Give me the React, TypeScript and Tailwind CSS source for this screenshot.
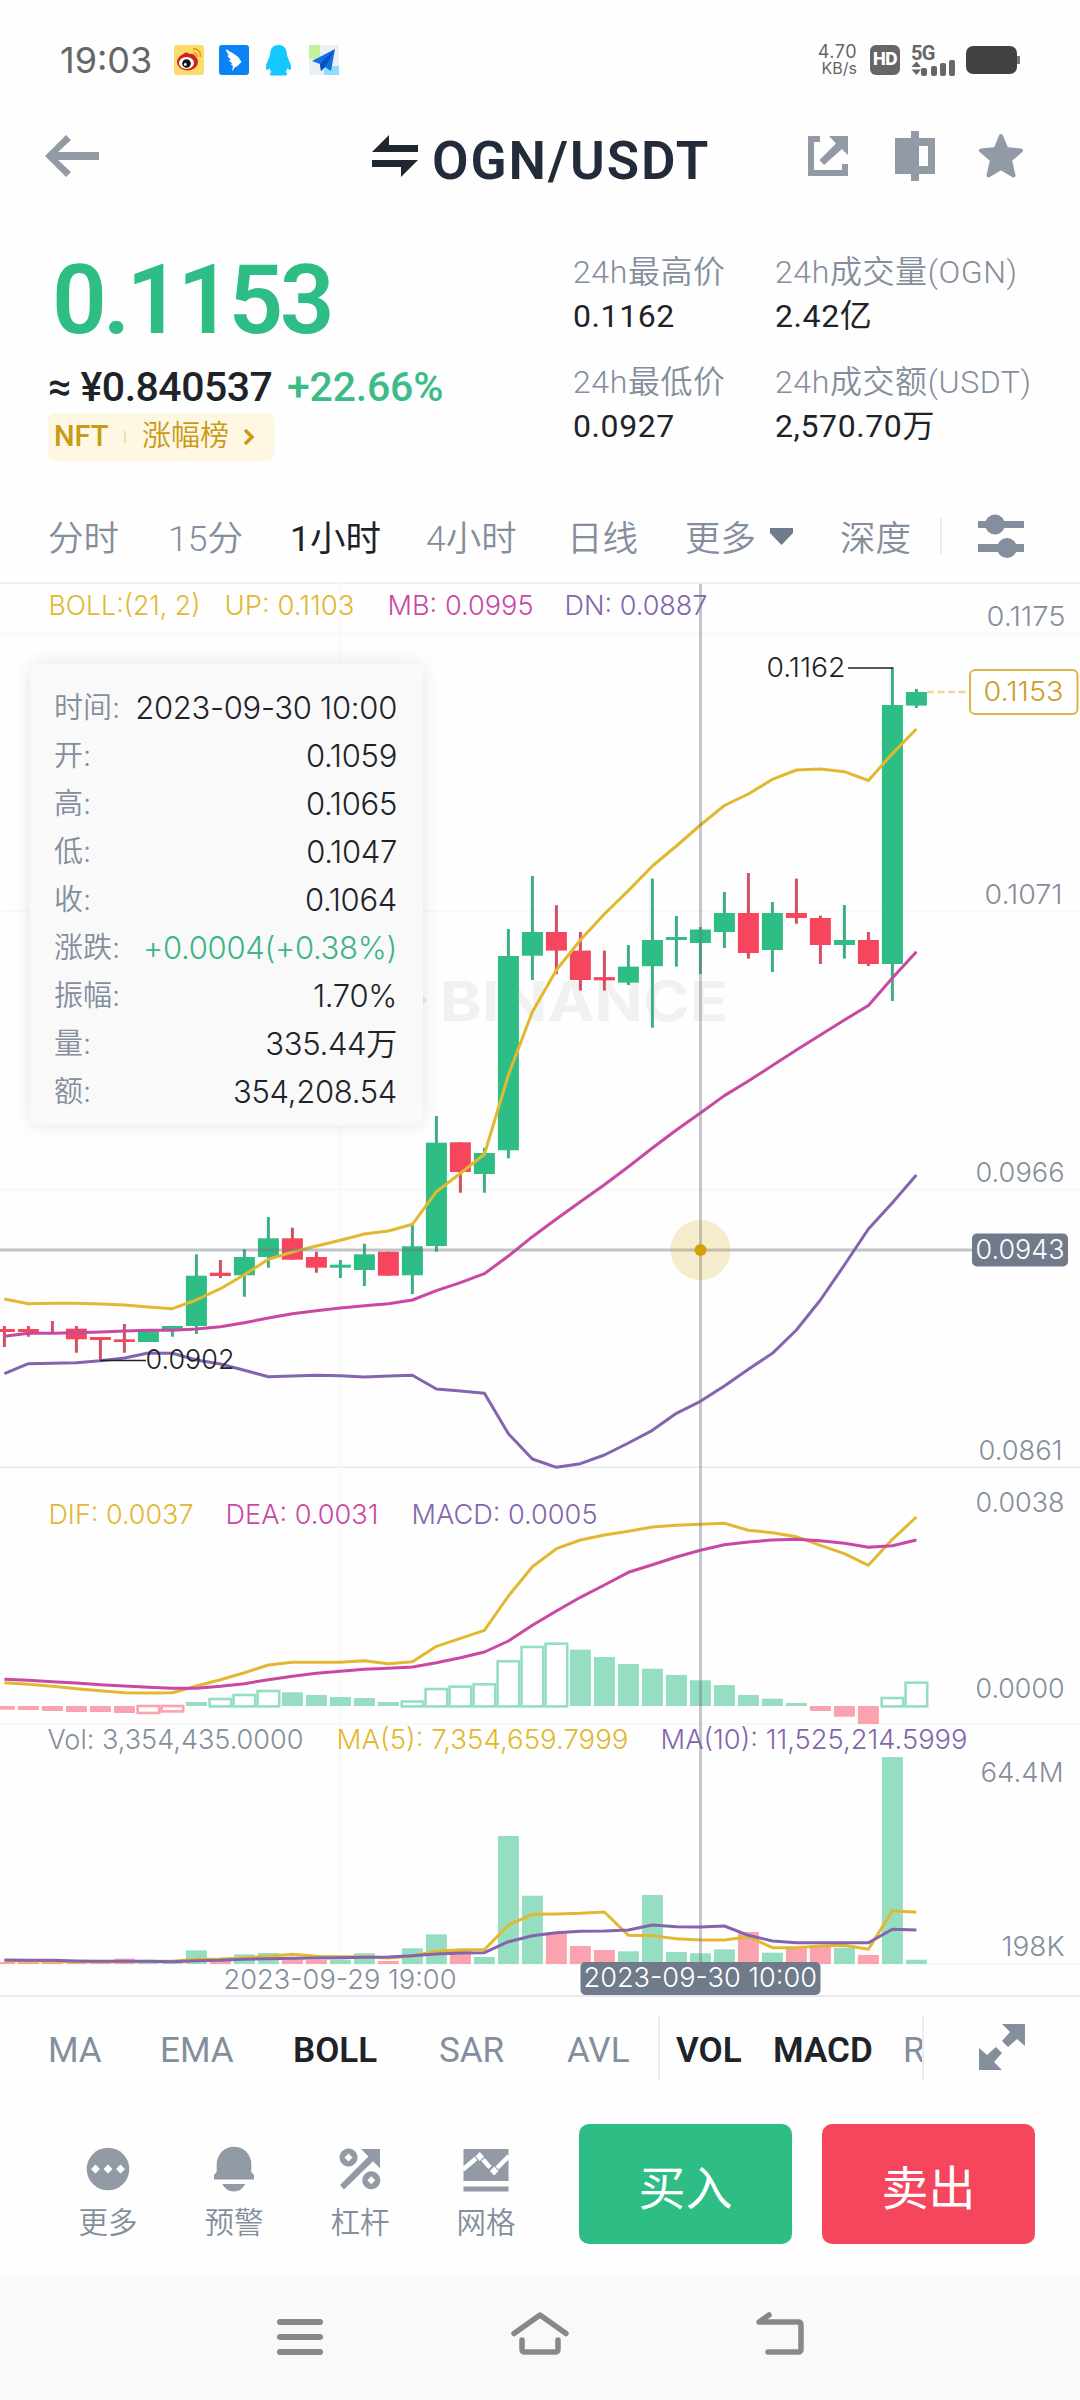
import type { ReactNode } from 'react'
import { clsx } from 'clsx'

const UI = "font-[Roboto,'Noto_Sans_CJK_SC',sans-serif]"
const NUM = "font-[Inter,'Noto_Sans_CJK_SC',sans-serif]"

const GREEN = '#2ebd85'
const RED = '#f6465d'
const GOLD = '#e2b830'
const PINK = '#c948a4'
const PURPLE = '#8465ad'
const GREY = '#848e9c'
const INK = '#1e2329'

// chart geometry: one candle every 24px, svg is shifted by the page offset
const TOP = 582
const HEIGHT = 1416
const cx = (i: number) => 4.4 + i * 24

// dir, high, body top, body bottom, low
type Candle = ['u' | 'd', number, number, number, number]
const CANDLES: Candle[] = [
  ['d', 1326, 1329, 1332, 1347], ['d', 1326, 1329, 1332, 1336.7], ['d', 1321, 1332, 1334, 1334],
  ['d', 1326, 1328.7, 1339.3, 1352.7], ['d', 1337, 1337, 1340, 1360], ['d', 1324, 1339.3, 1342, 1352.7],
  ['u', 1330.7, 1330.7, 1342, 1342], ['u', 1326, 1326, 1330, 1336.7], ['u', 1254.3, 1275.7, 1326, 1334],
  ['d', 1260, 1272.7, 1276, 1278], ['u', 1249, 1257, 1275.3, 1296.7], ['u', 1217, 1238.3, 1257, 1267.7],
  ['d', 1227.7, 1238.3, 1259.7, 1259.7], ['d', 1251.7, 1257, 1267.7, 1272.7], ['u', 1260, 1264.7, 1267.7, 1278],
  ['u', 1243.7, 1254.3, 1270, 1286], ['d', 1251.7, 1251.7, 1275.7, 1275.7], ['u', 1224, 1246.3, 1275.3, 1294],
  ['u', 1116, 1142.7, 1246, 1251.7], ['d', 1142.3, 1142.3, 1172, 1192.7], ['u', 1147.7, 1153, 1174, 1192.7],
  ['u', 929, 956, 1150.3, 1158.3], ['u', 876, 932, 955.7, 980], ['d', 905.2, 932, 950.6, 974.2],
  ['d', 932, 950.6, 980, 990.6], ['d', 950.6, 977.1, 980.4, 990.6], ['u', 945, 966.6, 982.6, 985],
  ['u', 878.6, 940, 966.2, 1027.7], ['u', 916, 937, 940, 966.6], ['u', 927, 929.5, 943, 974],
  ['u', 892, 913, 932, 948], ['d', 873, 913, 953, 958.6], ['u', 902, 913, 950, 972],
  ['d', 878.6, 913, 918, 923.7], ['d', 915.7, 918, 945, 964], ['u', 905, 940, 945, 958.6],
  ['d', 932, 940, 964, 966], ['u', 667.4, 705, 964, 1001], ['u', 689, 692, 705.6, 708],
]

const UP = [1299, 1303.7, 1303.3, 1303.3, 1304, 1305, 1307, 1308.7, 1300, 1288.7, 1274.7, 1259.3, 1252, 1246, 1240.3, 1234, 1231, 1224.3, 1191.7, 1173.3, 1154.3, 1075, 1011.7, 970, 940, 914, 890.6, 866, 846, 825, 805.5, 794, 779.4, 770, 769, 771.7, 780.5, 753.6, 729]
const MB = [1336.3, 1333.3, 1333.3, 1332.7, 1332, 1331, 1330.3, 1330.3, 1329, 1326.7, 1322.7, 1318, 1313.7, 1310.7, 1308, 1305.7, 1303.7, 1300, 1290.7, 1282.7, 1273.7, 1256, 1236.7, 1219, 1201.7, 1184.7, 1166.7, 1148, 1130, 1113, 1095.6, 1081, 1065.5, 1050, 1035, 1020, 1005.5, 978, 951.7]
const DN = [1373.7, 1363.7, 1363.3, 1362.7, 1360.7, 1358, 1353, 1353.3, 1360, 1364, 1370.3, 1376.7, 1376, 1375.3, 1375.7, 1377, 1376, 1375.3, 1389, 1391, 1393.3, 1433.7, 1459, 1467.3, 1463.7, 1455, 1443, 1430.3, 1413.3, 1401.3, 1386, 1369.3, 1353.3, 1330, 1300, 1265, 1229, 1202.7, 1175]
const DIF = [1682.7, 1684.3, 1686.3, 1688.7, 1690.7, 1692.7, 1693, 1692.7, 1686, 1679.7, 1672.7, 1665, 1662.3, 1662.3, 1662.3, 1660.7, 1663.7, 1661.7, 1646.3, 1638.3, 1630.3, 1596, 1566.7, 1548.7, 1540, 1535, 1531.3, 1527, 1525.3, 1524.3, 1523.3, 1530.3, 1532.7, 1536.7, 1545.3, 1553.7, 1565.3, 1539.3, 1517]
const DEA = [1679.3, 1680.3, 1681.7, 1683, 1684.7, 1686, 1687.3, 1688.3, 1688.3, 1686.3, 1683.7, 1679.7, 1676.3, 1673.3, 1671.3, 1669.3, 1668.3, 1667, 1662.7, 1657.7, 1652, 1641, 1625.3, 1611, 1597.3, 1585, 1572.3, 1564.7, 1557, 1550.3, 1544.7, 1542, 1540, 1539.3, 1540.7, 1543.3, 1547.3, 1545.7, 1540]
const MA5 = [1961, 1961, 1961.3, 1961.7, 1961.7, 1961.7, 1961.3, 1961.3, 1959.3, 1959, 1958, 1956.3, 1954.3, 1956.3, 1956.7, 1956.7, 1958, 1956, 1951.3, 1949.7, 1949.7, 1925, 1914.3, 1914, 1913.3, 1912, 1935.3, 1935.7, 1938.7, 1940, 1940, 1936.7, 1947.7, 1947.7, 1946, 1945.3, 1949.3, 1910.7, 1912.3]
const MA10 = [1960, 1960.3, 1960.3, 1961, 1961.3, 1961.3, 1961.3, 1961.7, 1960.7, 1960.3, 1959.3, 1958.7, 1958.3, 1958, 1957.7, 1957.3, 1957, 1955.7, 1954, 1953, 1952.7, 1941.7, 1935.7, 1932.7, 1931.3, 1931, 1930, 1925, 1926.7, 1927, 1926, 1935.3, 1941, 1942.7, 1942.7, 1942.7, 1942.7, 1929.3, 1930]

// histogram end of each bar against the zero line
const ZERO = 1706
const HIST = [1709.7, 1710, 1711, 1712, 1712, 1713, 1712.5, 1711, 1702, 1699, 1695, 1691, 1692.3, 1695, 1697, 1698, 1702, 1701.5, 1689, 1686.7, 1684.3, 1661.3, 1647, 1643.7, 1649.7, 1657, 1664, 1668.7, 1675, 1680.3, 1685, 1695, 1698.7, 1703, 1711, 1716.7, 1724, 1698, 1682.7]
const HOLLOW = new Set([6, 7, 9, 10, 11, 17, 18, 19, 20, 21, 22, 23, 37, 38])

const VOL_BASE = 1964
const VOL = [1962, 1962, 1962, 1962, 1962, 1958.7, 1962, 1962, 1950.3, 1958.7, 1954.3, 1953, 1958.7, 1960, 1959.7, 1953.3, 1961, 1948.3, 1934.3, 1949, 1957, 1836, 1895.7, 1932.3, 1946, 1950, 1951.3, 1895, 1952, 1953.3, 1949.3, 1932, 1952.7, 1948.3, 1946.7, 1947.7, 1955, 1757, 1959.7]

const GRID_Y = [633.6, 911.3, 1189.3, 1724, 1964]

const points = (ys: number[]) => ys.map((y, i) => `${cx(i)},${y}`).join(' ')

// text, left, right, baseline, colour, size
type Label = [string, number, number, number, string, number]
const LABELS: Label[] = [
  ['BOLL:(21, 2)', 50, 199, 614.5, GOLD, 27.5],
  ['UP: 0.1103', 226, 353, 614.5, GOLD, 27.5],
  ['MB: 0.0995', 389, 532, 614.5, PINK, 27.5],
  ['DN: 0.0887', 566, 706, 614.5, PURPLE, 27.5],
  ['DIF: 0.0037', 50, 192, 1523.5, GOLD, 27.5],
  ['DEA: 0.0031', 227, 377, 1523.5, PINK, 27.5],
  ['MACD: 0.0005', 413, 596, 1523.5, PURPLE, 27.5],
  ['Vol: 3,354,435.0000', 49, 302, 1748.5, GREY, 27.5],
  ['MA(5): 7,354,659.7999', 338, 627, 1748.5, GOLD, 27.5],
  ['MA(10): 11,525,214.5999', 662, 966, 1748.5, PURPLE, 27.5],
  ['0.1175', 988, 1064, 625.5, GREY, 27.5],
  ['0.1071', 986, 1061, 904, GREY, 27.5],
  ['0.0966', 977, 1063, 1181.5, GREY, 27.5],
  ['0.0861', 980, 1061, 1459.5, GREY, 27.5],
  ['0.0038', 977, 1063, 1511.5, GREY, 27.5],
  ['0.0000', 977, 1063, 1697.5, GREY, 27.5],
  ['64.4M', 982, 1062, 1781.5, GREY, 27.5],
  ['198K', 1003, 1063, 1955.5, GREY, 27.5],
  ['2023-09-29 19:00', 225, 455, 1988.5, GREY, 27.5],
  ['0.1162', 768, 844, 676.5, INK, 27.5],
  ['0.0902', 147, 233, 1368.5, INK, 27.5],
]

function ChartText({ label: [text, left, right, y, fill, size] }: { label: Label }) {
  return (
    <text x={left - 1.5} y={y} fill={fill} fontSize={size} fontWeight={350} textLength={right - left + 3} lengthAdjust="spacingAndGlyphs">
      {text}
    </text>
  )
}

function Chart() {
  return (
    <svg className={clsx('block', NUM)} width={1080} height={HEIGHT} viewBox={`0 ${TOP} 1080 ${HEIGHT}`}>
      <rect x={0} y={TOP} width={1080} height={2} fill="#eef0f2" />
      {GRID_Y.map((y) => <rect key={y} x={0} y={y - 1} width={1080} height={2} fill="#f8f8f9" />)}
      <rect x={0} y={1466.5} width={1080} height={1.5} fill="#e8eaed" />
      <rect x={339.5} y={TOP} width={2} height={1382} fill="#f8f8f9" />
      <rect x={0} y={1995} width={1080} height={2} fill="#e8e9eb" />

      {/* watermark */}
      <path d="M419 992l8.5 8.5l-8.5 8.5z" fill="#ededee" />
      <text x={440} y={1021} fontSize={55} fontWeight={700} fill="#f0f1f1" textLength={288} lengthAdjust="spacingAndGlyphs">BINANCE</text>

      {CANDLES.map(([dir, high, top, bottom, low], i) => (
        <g key={i} fill={dir === 'u' ? GREEN : RED}>
          <rect x={cx(i) - 1.5} y={high} width={3} height={low - high} fill={dir === 'u' ? '#3fae82' : '#d2505f'} />
          <rect x={cx(i) - 10.5} y={top} width={21} height={bottom - top} />
        </g>
      ))}

      {HIST.map((y, i) => {
        const color = y < ZERO ? '#96dec2' : '#faa2ae'
        const top = Math.min(y, ZERO)
        const h = Math.abs(y - ZERO)
        return HOLLOW.has(i)
          ? <rect key={i} x={cx(i) - 10.8} y={top} width={21.6} height={h + 0.4} fill="#fff" stroke={color} strokeWidth={2.6} />
          : <rect key={i} x={cx(i) - 10.5} y={top} width={21} height={h} fill={color} />
      })}

      {VOL.map((y, i) => (
        <rect key={i} x={cx(i) - 10.5} y={y} width={21} height={VOL_BASE - y} fill={CANDLES[i][0] === 'u' ? '#96dec2' : '#faa2ae'} />
      ))}

      <g fill="none" strokeWidth={3} strokeLinejoin="round">
        <polyline points={points(UP)} stroke={GOLD} />
        <polyline points={points(MB)} stroke={PINK} />
        <polyline points={points(DN)} stroke={PURPLE} />
        <polyline points={points(DIF)} stroke={GOLD} />
        <polyline points={points(DEA)} stroke={PINK} />
        <polyline points={points(MA5)} stroke={GOLD} />
        <polyline points={points(MA10)} stroke={PURPLE} />
      </g>

      {/* high / low markers */}
      <path d="M848 668H893M100 1360.5H146" stroke={INK} strokeWidth={1.5} />
      {LABELS.map((label) => <ChartText key={label[0] + label[3]} label={label} />)}

      {/* last price */}
      <path d="M927 692H969" stroke="#ecd79a" strokeWidth={2.5} strokeDasharray="7 3.5" />
      <rect x={970} y={670} width={107.5} height={44} rx={5} fill="#fff" stroke="#dcb840" strokeWidth={2} />
      <ChartText label={['0.1153', 985, 1062, 701, '#c99f2c', 27.5]} />

      {/* crosshair */}
      <g stroke="#6b7280" strokeOpacity={0.42} strokeWidth={2.8}>
        <path d="M700.5 584V1963" />
        <path d="M0 1250H972" />
      </g>
      <circle cx={700.5} cy={1250} r={30} fill="#d4a00a" fillOpacity={0.2} />
      <circle cx={700.5} cy={1250} r={6} fill="#d4a00a" />
      <rect x={972} y={1233.5} width={96} height={33} rx={5} fill="#707a8a" />
      <ChartText label={['0.0943', 977, 1063, 1259, '#fff', 27.5]} />
      <rect x={580.5} y={1962} width={240} height={33} rx={5} fill="#707a8a" />
      <ChartText label={['2023-09-30 10:00', 585, 815.5, 1987, '#fff', 27.5]} />
    </svg>
  )
}

const DETAILS = [
  ['时间:', '2023-09-30 10:00'],
  ['开:', '0.1059'],
  ['高:', '0.1065'],
  ['低:', '0.1047'],
  ['收:', '0.1064'],
  ['涨跌:', '+0.0004(+0.38%)'],
  ['振幅:', '1.70%'],
  ['量:', '335.44万'],
  ['额:', '354,208.54'],
]

function CandleDetails() {
  return (
    <div className={clsx('absolute top-[82px] left-[30px] h-[461px] w-[393px] rounded-md bg-[#f9f9f9] pt-5 pr-[26px] pl-6 shadow-[0_0_18px_rgba(0,0,0,0.1)]', NUM)}>
      {DETAILS.map(([label, value]) => (
        <div key={label} className="flex h-12 items-center justify-between whitespace-nowrap">
          <span className="text-[29px] font-[350] text-[#848e9c]">{label}</span>
          <span className={clsx('text-[31px] font-[350] tracking-[-0.3px]', value.startsWith('+') ? 'text-[#3db585]' : 'text-[#1e2329]')}>{value}</span>
        </div>
      ))}
    </div>
  )
}

function StatusBar() {
  return (
    <div className={clsx('flex h-[120px] items-center pr-[60px] pl-[60px] text-[#666]', NUM)}>
      <span className="w-[114px] text-[36px]">19:03</span>
      <svg width="30" height="30" viewBox="0 0 30 30">
        <rect width="30" height="30" rx="3" fill="#fddb6a" />
        <ellipse cx="13.5" cy="17" rx="10.5" ry="8.5" fill="#d2201f" />
        <path d="M7 12c3-5 7-6 8-2c4-2 7 0 6 3z" fill="#d2201f" />
        <ellipse cx="12.5" cy="18" rx="7.5" ry="6" fill="#fff" />
        <circle cx="12.5" cy="18.5" r="4.3" fill="#111" />
        <circle cx="11.3" cy="19.5" r="1.4" fill="#fff" />
        <path d="M19 4c5-.5 8 3 7.500 8M19.500 8c2.500 0 4 1.500 3.500 4" fill="none" stroke="#f09a1a" strokeWidth="1.800" />
      </svg>
      <svg className="ml-[15px]" width="30" height="30" viewBox="0 0 30 30">
        <rect width="30" height="30" rx="3" fill="#0a84f5" />
        <path d="M7 4c6 4 11 6 13 9l2.500 4-4.500 4.500-2 .5-3 4.500 1-5.500-2.500-2 2-.5-4-3 2.500-.3L8 10.500l2-.3C8 8 7 6 7 4z" fill="#fff" />
      </svg>
      <svg className="ml-4" width="27" height="31" viewBox="0 0 27 31">
        <path d="M13.500 0C7.500 0 5 4.500 5 10.500L1.500 19C.5 22 1 25 2 25c1 0 2-1 2.500-2 .5 2 1 3 2 4-2 1-2.500 3.500.5 3.500h13c3 0 2.500-2.500.5-3.500 1-1 1.500-2 2-4 .5 1 1.500 2 2.500 2s1.500-3 .5-6L22 10.500C22 4.500 19.500 0 13.500 0z" fill="#12c8ff" />
      </svg>
      <svg className="ml-[17px]" width="30" height="30" viewBox="0 0 30 30">
        <rect width="30" height="30" fill="#e9f1f7" />
        <path d="M0 0h11v14H0z" fill="#c2f19a" />
        <path d="M15 21h15v9H15z" fill="#8fdffc" />
        <path d="M26 4L3 16l8 3 1 7 4-4 6 4z" fill="#0f6ee8" />
        <path d="M26 4L11 19l1 7 4-4z" fill="#0a4fb8" />
      </svg>

      <div className="ml-auto flex items-center">
        <div className="flex flex-col items-end text-[16px] leading-[16px]">
          <span className="text-[18px] tracking-[0.5px]">4.70</span>
          <span>KB/s</span>
        </div>
        <div className="ml-[13px] flex h-[30px] w-[30px] items-center justify-center rounded-[6px] bg-[#666] text-[17px] font-extrabold tracking-[-0.5px] text-white">HD</div>
        <div className="ml-[11px] h-[31px] w-[46px]">
          <div className={clsx('h-[15px] text-[20px] leading-[17px] font-bold tracking-[-0.8px]', UI)}>5G</div>
          <svg className="block" width="46" height="16" viewBox="0 15 46 16" fill="#666">
            <path d="M.5 22l5-5.500L10 22zM.5 24.500l5 5.500L10 24.500z" />
            <rect x="10" y="23" width="6" height="8" rx="2" />
            <rect x="20" y="21" width="6" height="10" rx="2" />
            <rect x="29" y="18" width="6" height="13" rx="2" />
            <rect x="38" y="15" width="6" height="16" rx="2" />
          </svg>
        </div>
        <svg className="ml-[9px]" width="54" height="28" viewBox="0 0 54 28">
          <rect width="51" height="28" rx="7" fill="#424242" />
          <rect x="51" y="10" width="3" height="8" fill="#777" />
        </svg>
      </div>
    </div>
  )
}

function Header() {
  return (
    <header className="flex h-[72px] items-center pr-[57px] pl-[45px] text-[#929aa5]">
      <svg width="54" height="44" viewBox="0 0 54 44" fill="currentColor">
        <path d="M0 22L21 1l5 5-13 12h41v8H13l13 12-5 5z" />
      </svg>
      <div className="ml-[273px] flex items-center text-[#1f2630]">
        <svg width="46" height="44" viewBox="0 0 46 44" fill="currentColor">
          <path d="M0 18L17 1v10h29v7zM46 26L29 43V33H0v-7z" />
        </svg>
        <h1 className="ml-3.5 w-[280px] pt-2.5 text-[53px] leading-none font-semibold tracking-[1.9px] text-[#222b3a]">OGN/USDT</h1>
      </div>
      <svg className="ml-auto" width="40" height="40" viewBox="0 0 40 40" fill="currentColor">
        <path d="M0 0h12v6H6v28h28v-6h6v12H0z" />
        <path d="M21 0h19v19l-6-6-18 16-4.500-5L28 7.500z" />
      </svg>
      <svg className="ml-[47px]" width="40" height="50" viewBox="0 0 40 50" fill="currentColor">
        <path d="M16 0h8v7h16v36H24v7h-8v-7H0V7h16zM24 15v20h9V15z" fillRule="evenodd" />
      </svg>
      <svg className="ml-[44px]" width="44" height="46" viewBox="0 0 44 46" fill="currentColor" stroke="currentColor" strokeWidth="4" strokeLinejoin="round">
        <path d="M22 3l5.500 13L42 17.500 31 27l3.500 15.500L22 35 9.500 42.500 13 27 2 17.500 16.500 16z" />
      </svg>
    </header>
  )
}

function Stat({ label, value }: { label: string; value: string }) {
  return (
    <div className="h-[110px] whitespace-nowrap">
      <div className="text-[32px] leading-[44px] font-[350] tracking-[0.6px] text-[#848e9c]">{label}</div>
      <div className="text-[32px] leading-[44px] tracking-[0.6px] text-[#1e2329]">{value}</div>
    </div>
  )
}

function Summary() {
  return (
    <section className="flex h-[298px] pl-12">
      <div className="w-[525px] pt-[59px]">
        <div className="pl-1 text-[96px] leading-[98px] font-semibold tracking-[-3.8px] text-[#2ebd85]">0.1153</div>
        <div className="mt-[14px] flex h-[50px] items-center text-[41px] font-medium whitespace-pre">
          <span className="w-[239px] tracking-[-0.5px] text-[#1e2329]">≈ ¥0.840537</span>
          <span className="tracking-[-0.2px] text-[#3cbb89]">+22.66%</span>
        </div>
        <div className="flex h-[48px] w-[226px] items-center rounded-md bg-[#fdf7e4] pl-1.5 text-[29px] text-[#c99a18]">
          <span className="w-[70px] font-medium">NFT</span>
          <span className="mr-[16px] h-3 w-0.5 bg-[#eedfae]" />
          <span className="font-[350]">涨幅榜</span>
          <svg className="ml-3.5" width="12" height="18" viewBox="0 0 12 18" fill="none" stroke="currentColor" strokeWidth="3.500">
            <path d="M2 2l7 7-7 7" />
          </svg>
        </div>
      </div>
      <div className="w-[202px] pt-[58px]">
        <Stat label="24h最高价" value="0.1162" />
        <Stat label="24h最低价" value="0.0927" />
      </div>
      <div className="pt-[58px]">
        <Stat label="24h成交量(OGN)" value="2.42亿" />
        <Stat label="24h成交额(USDT)" value="2,570.70万" />
      </div>
    </section>
  )
}

function Intervals() {
  return (
    <nav className="flex h-[92px] items-center pl-[48px] text-[35.5px] font-[350] whitespace-nowrap text-[#848e9c]">
      <div className="flex pt-[7px]">
        <span className="w-[120px]">分时</span>
        <span className="w-[122px]">15分</span>
        <span className="w-[136px] font-normal text-[#1e2329]">1小时</span>
        <span className="w-[141px]">4小时</span>
        <span className="w-[118px]">日线</span>
        <span className="w-[85px]">更多</span>
      </div>
      <svg width="23" height="17" viewBox="0 0 23 17" fill="#707a8a"><path d="M0 0h23v5L11.500 17 0 5z" /></svg>
      <span className="ml-[47px] w-[100px] pt-[7px]">深度</span>
      <span className="h-9 w-0.5 bg-[#eaecef]" />
      <svg className="ml-9" width="46" height="44" viewBox="0 0 46 44" fill="#848e9c">
        <path d="M0 7h46v7H0zM0 30h46v8H0z" />
        <circle cx="17" cy="10.500" r="10" />
        <circle cx="29" cy="34" r="10" />
      </svg>
    </nav>
  )
}

const OVERLAYS = [
  { name: 'MA', width: 'w-[112px]' },
  { name: 'EMA', width: 'w-[133px]' },
  { name: 'BOLL', width: 'w-[146px]', active: true },
  { name: 'SAR', width: 'w-[128px]' },
  { name: 'AVL', width: 'w-[91px]' },
]

function Indicators() {
  return (
    <div className="flex h-[102px] items-center text-[35px] text-[#848e9c]">
      <div className="flex h-16 w-[924px] items-center overflow-hidden border-r-2 border-[#eaecef] pl-12 whitespace-nowrap">
        {OVERLAYS.map(({ name, width, active }) => (
          <span key={name} className={clsx('shrink-0 pt-1', width, active && 'font-semibold text-[#1e2329]')}>{name}</span>
        ))}
        <span className="h-16 w-0.5 shrink-0 bg-[#eaecef]" />
        <span className="ml-4 w-[97px] shrink-0 pt-1 font-semibold text-[#1e2329]">VOL</span>
        <span className="w-[130px] shrink-0 pt-1 font-semibold text-[#1e2329]">MACD</span>
        <span className="shrink-0 pt-1">R</span>
      </div>
      <svg className="-mt-1 ml-[55px]" width="46" height="46" viewBox="0 0 46 46" fill="#848e9c">
        <path d="M23 0h23v22l-8-7-9 8-6-6 8-9zM23 46H0V24l8 7 9-8 6 6-8 9z" />
      </svg>
    </div>
  )
}

const ACTIONS: { label: string; icon: ReactNode }[] = [
  {
    label: '更多',
    icon: (
      <>
        <circle cx="23" cy="23" r="21.300" />
        <path d="M10.500 18.500l4.500 4.500-4.500 4.500L6 23zM23 18.500l4.500 4.500-4.500 4.500-4.500-4.500zM35.500 18.500L40 23l-4.500 4.500L31 23z" fill="#fff" />
      </>
    ),
  },
  {
    label: '预警',
    icon: <path d="M5.700 18a17.300 17.300 0 0 1 34.600 0v8l2.700 3v4.500H3V29l2.700-3zM11.300 38h23q-4 7.500-11.500 7.500T11.300 38z" />,
  },
  {
    label: '杠杆',
    icon: (
      <>
        <path d="M24 3h19v19.300l-7-7L7 43.500 3 39 31.500 10.500z" />
        <path d="M11.500 2.500a9 9 0 1 0 .01 0zM11.500 7.500l4 4-4 4-4-4z" fillRule="evenodd" />
        <path d="M34.300 25.300a9 9 0 1 0 .01 0zM34.300 30.300l4 4-4 4-4-4z" fillRule="evenodd" />
      </>
    ),
  },
  {
    label: '网格',
    icon: (
      <>
        <path d="M.5 3h45v32H.5zM.5 40.500h45v5H.5z" />
        <path d="M0 23.500L13 12.500M20 13.500l7 8M34 22L46 10" fill="none" stroke="#fff" strokeWidth="4.500" />
        <path d="M16.800 6l4.300 4.500-4.300 4.500-4.300-4.500zM31.200 20.500l4.300 4.500-4.300 4.500-4.300-4.500z" fill="#fff" />
      </>
    ),
  },
]

function BottomBar() {
  return (
    <div className="flex h-[175px] pl-[45px]">
      {ACTIONS.map(({ label, icon }) => (
        <div key={label} className="flex w-[126px] flex-col items-center pt-[46px] text-[29.5px] font-[350] text-[#848e9c]">
          <svg width="46" height="46" viewBox="0 0 46 46" fill="currentColor" className="text-[#929aa5]">{icon}</svg>
          <span className="mt-[11px] leading-10">{label}</span>
        </div>
      ))}
      <button className="mt-6 ml-[30px] h-[120px] w-[213px] rounded-[10px] bg-[#2ebd85] pt-2.5 text-[47px] text-white">买入</button>
      <button className="mt-6 ml-[30px] h-[120px] w-[213px] rounded-[10px] bg-[#f6465d] pt-2.5 text-[47px] text-white">卖出</button>
    </div>
  )
}

function SystemNav() {
  return (
    <div className="flex h-[125px] items-start bg-[#f9f9f9] pt-[36px] pl-[277px]">
      <svg width="46" height="46" viewBox="0 0 46 46" stroke="#888" strokeWidth="6" strokeLinecap="round">
        <path d="M3 11h40M3 26h40M3 41h40" />
      </svg>
      <svg className="ml-[188px]" width="58" height="46" viewBox="0 0 58 46" fill="none" stroke="#888" strokeWidth="5.500" strokeLinecap="round" strokeLinejoin="round">
        <path d="M3 22.500L29 4l26 18.500" />
        <path d="M11 29v9q0 3 3 3h30q3 0 3-3v-9" />
      </svg>
      <svg className="ml-[187px]" width="48" height="46" viewBox="0 0 48 46" fill="none" stroke="#888" strokeWidth="5.500" strokeLinejoin="round">
        <path d="M12 41h30q3 0 3-3V14q0-3-3-3H3L13 4" strokeLinecap="round" />
      </svg>
    </div>
  )
}

export default function App() {
  return (
    <div className={clsx('flex h-[2400px] w-[1080px] flex-col overflow-hidden bg-[#fefefe]', UI)}>
      <StatusBar />
      <Header />
      <Summary />
      <Intervals />
      <div className="relative h-[1416px]">
        <Chart />
        <CandleDetails />
      </div>
      <Indicators />
      <BottomBar />
      <SystemNav />
    </div>
  )
}
